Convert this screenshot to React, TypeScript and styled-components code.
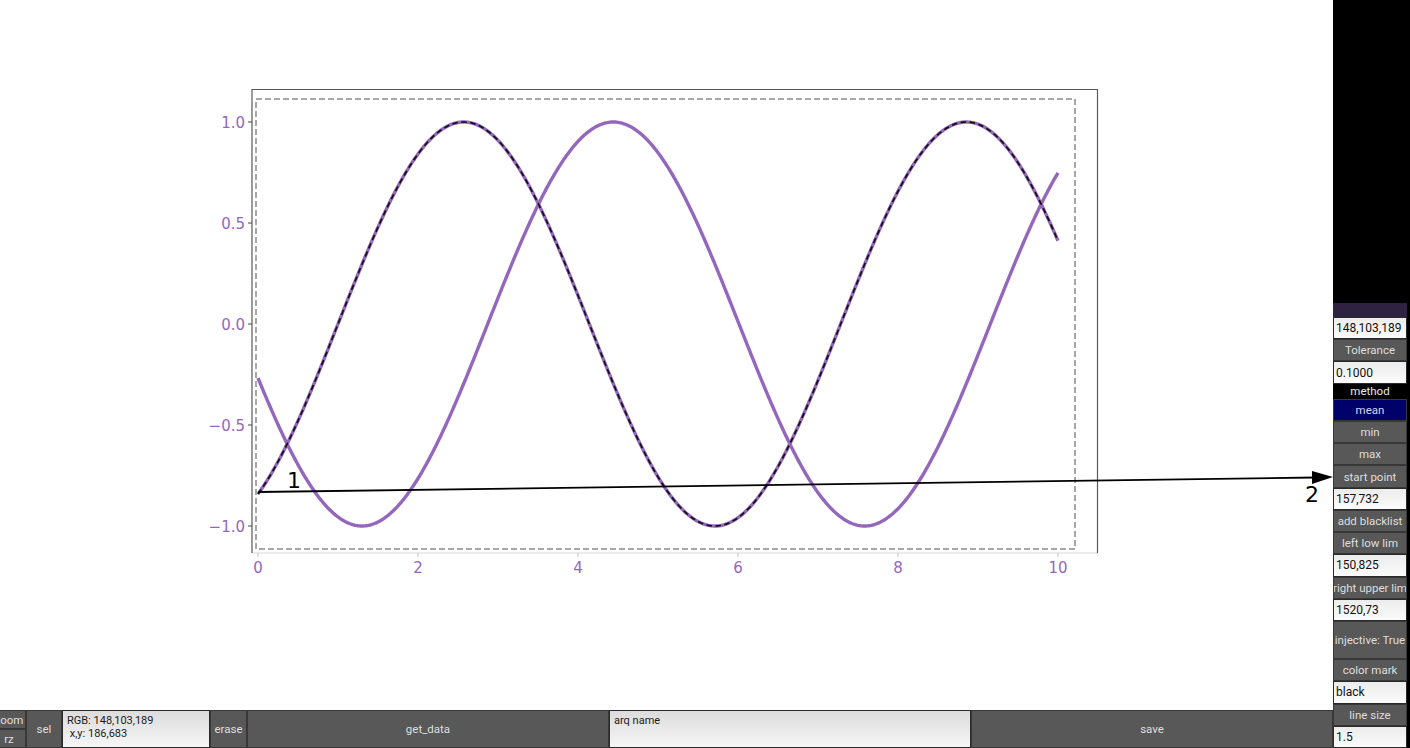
import React from 'react';
import styled, { createGlobalStyle } from 'styled-components';

const GlobalStyle = createGlobalStyle`
  html, body { margin: 0; padding: 0; background: #fff; overflow: hidden; }
  #root { width: 1410px; height: 748px; }
  * { box-sizing: border-box; }
`;

const Screen = styled.div`
  display: flex;
  width: 1410px;
  height: 748px;
  font-family: Roboto, "Noto Sans", sans-serif;
  overflow: hidden;
`;

const Main = styled.div`
  width: 1333px;
  display: flex;
  flex-direction: column;
`;

const Canvas = styled.div`
  flex: 1;
  background: #fff;
  min-height: 0;
`;

const Toolbar = styled.div`
  height: 38px;
  display: flex;
  background: #2e2e2e;
`;

const Stack = styled.div<{ $w: number; $shift?: number }>`
  width: ${p => p.$w}px;
  margin-left: ${p => p.$shift ?? 0}px;
  display: flex;
  flex-direction: column;
`;

const Button = styled.div<{ $active?: boolean }>`
  display: flex;
  align-items: center;
  justify-content: center;
  background: ${p => (p.$active ? '#00006a' : '#585858')};
  color: ${p => (p.$active ? '#d4d6ee' : '#dedede')};
  font-size: 12px;
  border: 1px solid #383838;
  white-space: nowrap;
  overflow: hidden;
`;

const ToolButton = styled(Button)<{ $w?: number }>`
  ${p => (p.$w ? `width: ${p.$w}px;` : 'flex: 1;')}
  font-size: 11.5px;
`;

const StackButton = styled(Button)`
  flex: 1;
  font-size: 11.5px;
`;

const Field = styled.div<{ $w?: number }>`
  ${p => (p.$w ? `width: ${p.$w}px;` : 'flex: 1;')}
  background: linear-gradient(#dcdcdc, #f6f6f6);
  border: 1px solid #2a2a2a;
  color: #1c1c1c;
  font-size: 11px;
  line-height: 13px;
  padding: 3px 4px;
  white-space: pre;
  overflow: hidden;
`;

const Side = styled.div`
  width: 77px;
  background: #000;
  padding-right: 3px;
  display: flex;
  flex-direction: column;
`;

const Blank = styled.div`
  height: 303px;
  flex: none;
`;

const Swatch = styled.div<{ $color: string }>`
  height: 14px;
  flex: none;
  background: ${p => p.$color};
`;

const SideButton = styled(Button)<{ $h?: number }>`
  ${p => (p.$h ? `height: ${p.$h}px; flex: none;` : 'flex: 1;')}
  min-height: 0;
  font-size: 11.5px;
`;

const SideLabel = styled.div`
  height: 15px;
  flex: none;
  display: flex;
  align-items: center;
  justify-content: center;
  color: #e8e8e8;
  font-size: 11.5px;
  background: #000;
`;

const SideField = styled.div`
  flex: 1;
  min-height: 0;
  display: flex;
  align-items: center;
  background: linear-gradient(#ececec, #fbfbfb);
  border: 1px solid #2a2a2a;
  color: #111;
  font-size: 12px;
  padding-left: 2px;
  white-space: nowrap;
  overflow: hidden;
`;

const PURPLE = '#9467bd';
const X0 = 258;
const XS = 80;
const Y0 = 324;
const YS = 202;

function curve(f: (x: number) => number): string {
  let d = '';
  for (let i = 0; i <= 600; i++) {
    const x = i / 60;
    const px = X0 + XS * x;
    const py = Y0 - YS * f(x);
    d += (i ? 'L' : 'M') + px.toFixed(2) + ' ' + py.toFixed(2);
  }
  return d;
}

const c1 = curve(x => Math.sin(x - 1));
const c2 = curve(x => -Math.cos(x - 1.3));

const yTicks: [number, string][] = [
  [1, '1.0'],
  [0.5, '0.5'],
  [0, '0.0'],
  [-0.5, '\u22120.5'],
  [-1, '\u22121.0'],
];
const xTicks = [0, 2, 4, 6, 8, 10];

function Plot() {
  return (
    <svg width="1333" height="710" viewBox="0 0 1333 710" style={{ display: 'block' }}>
      <rect x="252" y="89" width="846" height="464" fill="#fff" />
      <line x1="252" y1="553" x2="1098" y2="553" stroke="#e4e4e4" strokeWidth="1.5" />
      <polyline points="252,553 252,89.5 1097.5,89.5 1097.5,553" fill="none" stroke="#5a5a5a" strokeWidth="1.2" />
      <rect x="256" y="99" width="819" height="450" fill="none" stroke="#8a8a8a" strokeWidth="1.5" strokeDasharray="6 3" />
      {yTicks.map(([v, t]) => {
        const y = Y0 - YS * v;
        return (
          <g key={t}>
            <line x1="248" y1={y} x2="252" y2={y} stroke="#444" strokeWidth="1" />
            <text x="245" y={y + 5.5} textAnchor="end" fill={PURPLE} fontFamily="'DejaVu Sans', sans-serif" fontSize="15">
              {t}
            </text>
          </g>
        );
      })}
      {xTicks.map(v => {
        const x = X0 + XS * v;
        return (
          <g key={v}>
            <line x1={x} y1="553" x2={x} y2="557" stroke="#c8b6dc" strokeWidth="1" />
            <text x={x} y="573" textAnchor="middle" fill={PURPLE} fontFamily="'DejaVu Sans', sans-serif" fontSize="15">
              {v}
            </text>
          </g>
        );
      })}
      <path d={c2} fill="none" stroke={PURPLE} strokeWidth="3.4" strokeLinejoin="round" />
      <path d={c1} fill="none" stroke={PURPLE} strokeWidth="3.4" strokeLinejoin="round" />
      <path d={c1} fill="none" stroke="#111" strokeWidth="1.7" strokeDasharray="5.5 3.5" />
      <line x1="258" y1="492" x2="1316" y2="477.5" stroke="#000" strokeWidth="1.8" />
      <polygon points="1333,477 1312,471 1312,484" fill="#000" />
      <text x="287" y="488" fill="#000" fontFamily="'DejaVu Sans', sans-serif" fontSize="22">1</text>
      <text x="1305" y="502" fill="#000" fontFamily="'DejaVu Sans', sans-serif" fontSize="22">2</text>
    </svg>
  );
}

export default function App() {
  return (
    <Screen>
      <GlobalStyle />
      <Main>
        <Canvas>
          <Plot />
        </Canvas>
        <Toolbar>
          <Stack $w={34} $shift={-8}>
            <StackButton>zoom</StackButton>
            <StackButton>rz</StackButton>
          </Stack>
          <ToolButton $w={36}>sel</ToolButton>
          <Field $w={148}>{'RGB: 148,103,189\n x,y: 186,683'}</Field>
          <ToolButton $w={37}>erase</ToolButton>
          <ToolButton $w={362}>get_data</ToolButton>
          <Field $w={362}>arq name</Field>
          <ToolButton>save</ToolButton>
        </Toolbar>
      </Main>
      <Side>
        <Blank />
        <Swatch $color="#2f2240" />
        <SideField>148,103,189</SideField>
        <SideButton>Tolerance</SideButton>
        <SideField>0.1000</SideField>
        <SideLabel>method</SideLabel>
        <SideButton $active>mean</SideButton>
        <SideButton>min</SideButton>
        <SideButton>max</SideButton>
        <SideButton>start point</SideButton>
        <SideField>157,732</SideField>
        <SideButton>add blacklist</SideButton>
        <SideButton>left low lim</SideButton>
        <SideField>150,825</SideField>
        <SideButton>right upper lim</SideButton>
        <SideField>1520,73</SideField>
        <SideButton $h={38}>injective: True</SideButton>
        <SideButton>color mark</SideButton>
        <SideField>black</SideField>
        <SideButton>line size</SideButton>
        <SideField>1.5</SideField>
      </Side>
    </Screen>
  );
}
